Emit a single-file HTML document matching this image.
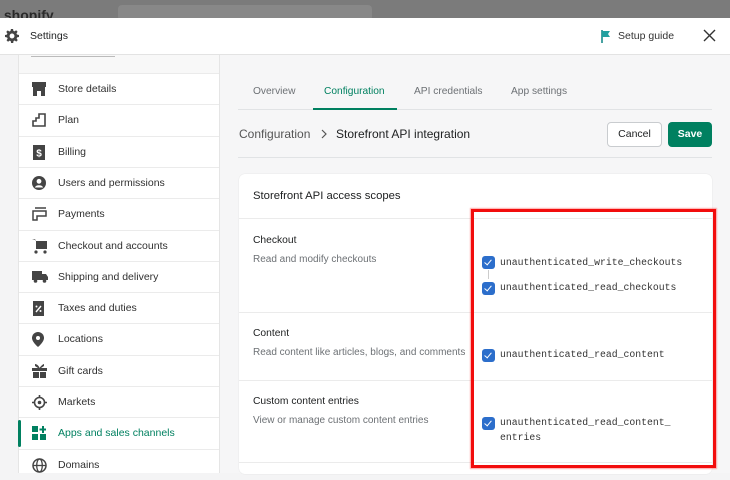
<!DOCTYPE html>
<html><head><meta charset="utf-8"><style>
*{box-sizing:border-box;margin:0;padding:0}
body{width:730px;height:473px;overflow:hidden;background:#f4f4f5;font-family:"Liberation Sans",sans-serif;color:#202223;position:relative}
.top{position:absolute;left:0;top:0;width:730px;height:18px;background:#7b7b7b}
.hdr{position:absolute;left:0;top:18px;width:730px;height:37px;background:#fff;border-bottom:1px solid #e3e3e3}
.side{position:absolute;left:18px;top:55px;width:202px;height:418px;background:#fff;border-left:1px solid #e5e5e5;border-right:1px solid #e5e5e5}
.item{position:absolute;left:0;width:200px;height:31.3px;border-top:1px solid #ebebeb;font-size:10.5px;color:#303030;line-height:30px;padding-left:39px}
.item svg{position:absolute;left:13px;top:8px}
.main{position:absolute;left:220px;top:55px;width:510px;height:418px;background:#f6f6f7}
.abs{position:absolute}
.mono{font-family:"Liberation Mono",monospace;font-size:9.8px;color:#333;position:absolute;left:500px}
.cb{position:absolute;left:482px;width:13px;height:13px;background:#2c6ecb;border-radius:3px}
.cb:after{content:"";position:absolute;left:4px;top:1.5px;width:3px;height:6px;border:solid #fff;border-width:0 1.6px 1.6px 0;transform:rotate(40deg)}
.desc{position:absolute;left:253px;font-size:10px;color:#6d7175}
</style></head><body>
<div class="top">
<div class="abs" style="left:118px;top:5px;width:254px;height:16px;background:#888;border-radius:4px"></div>
<div class="abs" style="left:0;top:7px;font-size:14px;font-weight:bold;color:#2a2a2a">&nbsp;shopify</div>
</div>
<div class="hdr">
<svg class="abs" style="left:5px;top:11px" width="14" height="14" viewBox="0 0 20 20"><path fill="#444" d="M10 6.5a3.5 3.5 0 100 7 3.5 3.5 0 000-7zM8.5 0h3l.5 2.7 1.6.7 2.3-1.6 2.1 2.1-1.6 2.3.7 1.6L20 8.5v3l-2.7.5-.7 1.6 1.6 2.3-2.1 2.1-2.3-1.6-1.6.7-.5 2.9h-3l-.5-2.7-1.6-.7-2.3 1.6-2.1-2.1 1.6-2.3-.7-1.6L0 11.5v-3l2.7-.5.7-1.6-1.6-2.3 2.1-2.1 2.3 1.6 1.6-.7z"/></svg>
<div class="abs" style="left:30px;top:12px;font-size:10.5px">Settings</div>
<svg class="abs" style="left:601px;top:12px" width="10" height="13" viewBox="0 0 10 13"><path d="M1 0v13" stroke="#1a8a8a" stroke-width="1.6"/><path d="M1 1h8L7 4l2 3H1z" fill="#21a0a0"/></svg>
<div class="abs" style="left:618px;top:12px;font-size:10.5px;color:#333">Setup guide</div>
<svg class="abs" style="left:703px;top:11px" width="13" height="13" viewBox="0 0 13 13"><path d="M1 1l11 11M12 1L1 12" stroke="#333" stroke-width="1.4"/></svg>
</div>
<div class="side">
<div class="abs" style="left:0;top:0;width:200px;height:18px;background:#f8f8f8"></div>
<div class="abs" style="left:12px;top:1px;width:84px;height:1px;background:#bbb"></div>
<div class="item" style="top:18px"><svg width="14" height="14" viewBox="0 0 14 14"><path fill="#444" d="M0 0h14v5H0zM1 5h12v9H9V9H5v5H1z"/></svg>Store details</div>
<div class="item" style="top:49.3px"><svg width="14" height="14" viewBox="0 0 14 14"><path fill="none" stroke="#444" stroke-width="1.6" d="M1 13V8h3V5h3V1h6v12z"/></svg>Plan</div>
<div class="item" style="top:80.6px"><svg width="14" height="15" viewBox="0 0 14 15"><rect x="1" y="0" width="12" height="15" fill="#444"/><text x="7" y="11.5" font-size="10" fill="#fff" text-anchor="middle" font-family="Liberation Sans" font-weight="bold">$</text></svg>Billing</div>
<div class="item" style="top:111.9px"><svg width="14" height="14" viewBox="0 0 14 14"><circle cx="7" cy="7" r="7" fill="#444"/><circle cx="7" cy="5.3" r="2.4" fill="#fff"/><path d="M2.8 11.5a4.5 3.5 0 018.4 0z" fill="#fff"/></svg>Users and permissions</div>
<div class="item" style="top:143.2px"><svg width="15" height="14" viewBox="0 0 15 14"><path fill="none" stroke="#444" stroke-width="1.5" d="M3 1h11M1 4h13v5H5v4H1z"/></svg>Payments</div>
<div class="item" style="top:174.5px"><svg width="15" height="15" viewBox="0 0 15 15"><path fill="#444" d="M0 0h3l1 2h11v8H4V1z"/><circle cx="4" cy="13" r="1.6" fill="#444"/><circle cx="13" cy="13" r="1.6" fill="#444"/></svg>Checkout and accounts</div>
<div class="item" style="top:205.8px"><svg width="16" height="13" viewBox="0 0 16 13"><path fill="#444" d="M0 1h10v9H0zM10 4h4l2 3v3h-6z"/><circle cx="3.5" cy="11" r="1.8" fill="#444"/><circle cx="12.5" cy="11" r="1.8" fill="#444"/></svg>Shipping and delivery</div>
<div class="item" style="top:237.1px"><svg width="13" height="15" viewBox="0 0 13 15"><rect x="1" y="0" width="11" height="15" fill="#444"/><path d="M4 11l5-6" stroke="#fff" stroke-width="1.4"/><circle cx="4.5" cy="5.5" r="1" fill="#fff"/><circle cx="8.5" cy="10" r="1" fill="#fff"/></svg>Taxes and duties</div>
<div class="item" style="top:268.4px"><svg width="12" height="15" viewBox="0 0 12 15"><path fill="#444" d="M6 0a6 6 0 016 6c0 4-6 9-6 9S0 10 0 6a6 6 0 016-6z"/><circle cx="6" cy="6" r="2" fill="#fff"/></svg>Locations</div>
<div class="item" style="top:299.7px"><svg width="15" height="14" viewBox="0 0 15 14"><path fill="#444" d="M0 4h15v3H0zM1 8h6v6H1zM8 8h6v6H8zM3 0c2 0 4 2 4.5 4C9 2 11 0 12 0v2L9 4H6L3 2z"/></svg>Gift cards</div>
<div class="item" style="top:331px"><svg width="15" height="15" viewBox="0 0 15 15"><circle cx="7.5" cy="7.5" r="5" fill="none" stroke="#444" stroke-width="1.6"/><circle cx="7.5" cy="7.5" r="1.8" fill="#444"/><path d="M7.5 0v3M7.5 12v3M0 7.5h3M12 7.5h3" stroke="#444" stroke-width="1.6"/></svg>Markets</div>
<div class="item" style="top:362.3px;color:#008060"><div class="abs" style="left:-1px;top:2px;width:3px;height:27px;background:#008060;border-radius:2px"></div><svg width="14" height="14" viewBox="0 0 14 14"><path fill="#008060" d="M0 0h6v6H0zM0 8h6v6H0zM8 8h6v6H8zM10 0h2v2.5h2.5v2H12V7h-2V4.5H7.5v-2H10z"/></svg>Apps and sales channels</div>
<div class="item" style="top:393.6px"><svg width="15" height="15" viewBox="0 0 15 15"><circle cx="7.5" cy="7.5" r="6.5" fill="none" stroke="#444" stroke-width="1.5"/><ellipse cx="7.5" cy="7.5" rx="2.8" ry="6.5" fill="none" stroke="#444" stroke-width="1.3"/><path d="M1 7.5h13" stroke="#444" stroke-width="1.3"/></svg>Domains</div>
</div>
<div class="main"></div>
<div class="abs" style="left:253px;top:86px;font-size:10.2px;color:#6d7175">Overview</div>
<div class="abs" style="left:324px;top:86px;font-size:10.2px;color:#008060">Configuration</div>
<div class="abs" style="left:414px;top:86px;font-size:10.2px;color:#6d7175">API credentials</div>
<div class="abs" style="left:511px;top:86px;font-size:10.2px;color:#6d7175">App settings</div>
<div class="abs" style="left:238px;top:109px;width:474px;height:1px;background:#e1e3e5"></div>
<div class="abs" style="left:313px;top:108px;width:84px;height:2px;background:#008060"></div>
<div class="abs" style="left:239px;top:127px;font-size:12px;color:#555">Configuration</div>
<svg class="abs" style="left:320px;top:129px" width="8" height="10" viewBox="0 0 8 10"><path d="M2 1l4 4-4 4" fill="none" stroke="#555" stroke-width="1.2"/></svg>
<div class="abs" style="left:336px;top:127px;font-size:12px;color:#202223">Storefront API integration</div>
<div class="abs" style="left:607px;top:122px;width:55px;height:25px;background:#fff;border:1px solid #c9cccf;border-radius:4px;font-size:10.5px;text-align:center;line-height:23px">Cancel</div>
<div class="abs" style="left:668px;top:122px;width:44px;height:25px;background:#008060;border-radius:4px;font-size:10.5px;text-align:center;line-height:25px;color:#fff;font-weight:bold">Save</div>
<div class="abs" style="left:238px;top:157px;width:474px;height:1px;background:#e1e3e5"></div>
<div class="abs" style="left:239px;top:174px;width:473px;height:300px;background:#fff;border-radius:6px;box-shadow:0 0 1px rgba(0,0,0,.15)"></div>
<div class="abs" style="left:253px;top:190px;font-size:11.3px;color:#202223">Storefront API access scopes</div>
<div class="abs" style="left:239px;top:218px;width:473px;height:1px;background:#ebebeb"></div>
<div class="abs" style="left:239px;top:312px;width:473px;height:1px;background:#ebebeb"></div>
<div class="abs" style="left:239px;top:380px;width:473px;height:1px;background:#ebebeb"></div>
<div class="abs" style="left:239px;top:462px;width:473px;height:1px;background:#ebebeb"></div>
<div class="abs" style="left:253px;top:235px;font-size:10.3px">Checkout</div>
<div class="desc" style="top:254px">Read and modify checkouts</div>
<div class="abs" style="left:253px;top:328px;font-size:10.3px">Content</div>
<div class="desc" style="top:347px">Read content like articles, blogs, and comments</div>
<div class="abs" style="left:253px;top:396px;font-size:10.3px">Custom content entries</div>
<div class="desc" style="top:415px">View or manage custom content entries</div>
<div class="cb" style="top:256px"></div>
<div class="abs" style="left:488px;top:270px;width:1px;height:9px;background:#ccc"></div>
<div class="cb" style="top:282px"></div>
<div class="cb" style="top:349px"></div>
<div class="cb" style="top:417px"></div>
<div class="mono" style="top:257px">unauthenticated_write_checkouts</div>
<div class="mono" style="top:282px">unauthenticated_read_checkouts</div>
<div class="mono" style="top:349px">unauthenticated_read_content</div>
<div class="mono" style="top:417px">unauthenticated_read_content_</div>
<div class="mono" style="top:432px">entries</div>
<div class="abs" style="left:471px;top:209px;width:245px;height:259px;border:3px solid #f20d0d;box-shadow:0 0 1px 1px rgba(255,80,80,.5)"></div>
</body></html>
